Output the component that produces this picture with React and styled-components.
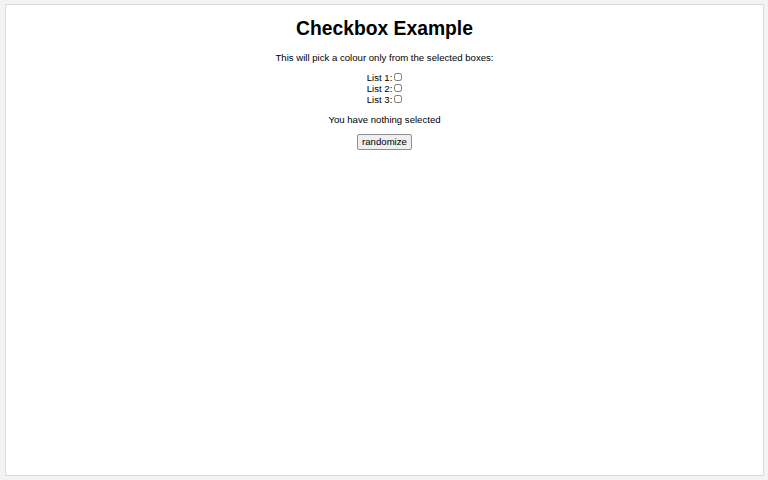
import React, { useState } from 'react'
import styled, { createGlobalStyle } from 'styled-components'

const Global = createGlobalStyle`
    html, body {
        margin:0;
        padding:0;
        background:#f3f3f3;
        font-family:"Liberation Sans", Arial, sans-serif;
    }
`

const Page = styled.div`
    padding:4px 4px 4px 5px;
    height:480px;
    box-sizing:border-box;
`

const Panel = styled.main`
    height:100%;
    box-sizing:border-box;
    background:#fff;
    border:1px solid #dcdcdc;
    text-align:center;
    color:#000;
`

const Title = styled.h1`
    font-size:19.3px;
    font-weight:bold;
    margin:13px 0 0;
    line-height:22px;
`

const Intro = styled.p`
    font-size:9.6px;
    margin:12px 0 0;
    line-height:12px;
`

const Lists = styled.div`
    margin-top:8px;
    font-size:9.6px;
    line-height:11px;
`

const ListRow = styled.label`
    display:block;
`

const Box = styled.input`
    width:8px;
    height:8px;
    margin:0 0 0 2px;
    vertical-align:0px;
`

const Status = styled.p`
    font-size:9.6px;
    line-height:12px;
    margin:9px 0 0;
`

const Button = styled.button`
    margin-top:8px;
    font-family:inherit;
    font-size:9.6px;
    line-height:12px;
    padding:1px 4px;
    background:#efefef;
    border:1px solid #8f8f8f;
    border-radius:2px;
    color:#000;
`

const colours = ['red', 'green', 'blue', 'orange', 'purple', 'teal']

export default function App() {
    const [checked, setChecked] = useState([false, false, false])
    const [picked, setPicked] = useState(null)

    function toggle(i){
        const next = [...checked]
        next[i] = !next[i]
        setChecked(next)
    }

    const anySelected = checked.some(Boolean)

    return (
        <>
        <Global />
        <Page>
            <Panel>
                <Title>Checkbox Example</Title>
                <Intro>This will pick a colour only from the selected boxes:</Intro>
                <Lists>
                    {[1, 2, 3].map((n, i) => (
                        <ListRow key={n}>
                            List {n}:<Box type="checkbox" checked={checked[i]} onChange={() => toggle(i)} />
                        </ListRow>
                    ))}
                </Lists>
                <Status>
                    {anySelected
                        ? (picked ? `You picked ${picked}` : 'Press randomize')
                        : 'You have nothing selected'}
                </Status>
                <Button onClick={() => setPicked(colours[Math.floor(Math.random() * colours.length)])}>
                    randomize
                </Button>
            </Panel>
        </Page>
        </>
    )
}
